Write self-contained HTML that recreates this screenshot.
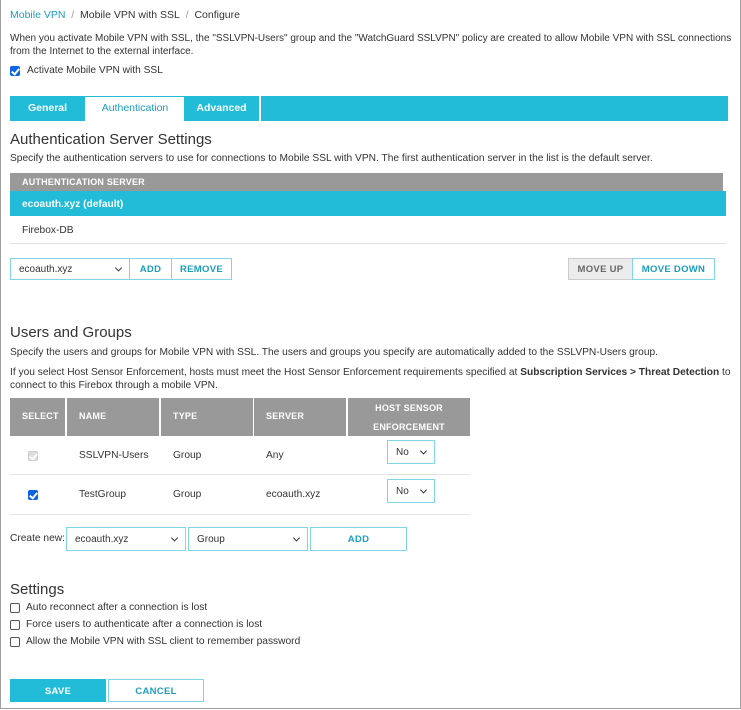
<!DOCTYPE html>
<html><head><meta charset="utf-8"><style>
*{box-sizing:border-box;margin:0;padding:0}
body{width:741px;height:710px;background:#fff;font-family:"Liberation Sans",sans-serif;font-size:10.2px;color:#333;position:relative;overflow:hidden}
.frame{position:absolute;left:0;top:0;width:741px;height:709px;border:1px solid #a0a0a0;border-top:none}
.a{position:absolute;white-space:nowrap}
h2{position:absolute;font-weight:normal;font-size:15px;color:#333;white-space:nowrap}
.teal{background:#22bcd8}
.cb{position:absolute;width:10px;height:10px;border:1px solid #555;border-radius:2px;background:#fff}
.cbon{background:#0a64e8;border-color:#0a64e8}
.cbon::after{content:"";position:absolute;left:2px;top:0px;width:3px;height:6px;border:solid #fff;border-width:0 2px 2px 0;transform:rotate(40deg)}
.cbdis{background:#ddd;border-color:#ccc}
.cbdis::after{content:"";position:absolute;left:2px;top:0px;width:3px;height:6px;border:solid #fff;border-width:0 2px 2px 0;transform:rotate(40deg)}
.btn{position:absolute;border:1px solid #7fd6e8;background:#fff;color:#1a9ec0;font-weight:bold;font-size:9.5px;text-align:center;letter-spacing:.3px}
.sel{position:absolute;border:1px solid #7fd6e8;background:#fff;font-size:10px;padding-left:8px;color:#333}
.sel::after{content:"";position:absolute;right:8px;top:50%;width:4px;height:4px;border:solid #333;border-width:0 1.3px 1.3px 0;transform:translateY(-70%) rotate(45deg)}
.th{position:absolute;background:#999;color:#fff;font-weight:bold;font-size:9px;letter-spacing:.2px}
.line{position:absolute;height:1px;background:#e2e2e2}
</style></head><body>
<div class="frame"></div>
<div class="a" style="left:10px;top:9px;font-size:10.5px"><span style="color:#1a9ec0">Mobile VPN</span><span style="color:#999">&nbsp;&nbsp;/&nbsp;&nbsp;</span>Mobile VPN with SSL<span style="color:#999">&nbsp;&nbsp;/&nbsp;&nbsp;</span>Configure</div>
<div class="a" style="left:10px;top:32px;line-height:13px;font-size:10px">When you activate Mobile VPN with SSL, the "SSLVPN-Users" group and the "WatchGuard SSLVPN" policy are created to allow Mobile VPN with SSL connections<br>from the Internet to the external interface.</div>
<div class="cb cbon" style="left:10px;top:66px"></div>
<div class="a" style="left:27px;top:65px">Activate Mobile VPN with SSL</div>

<div class="teal a" style="left:10px;top:96px;width:718px;height:25px"></div>
<div class="a" style="left:85px;top:96px;width:99px;height:25px;background:#fff;border-top:1px solid #22bcd8"></div>
<div class="a" style="left:259px;top:96px;width:2px;height:25px;background:#fff"></div>
<div class="a" style="left:10px;top:102px;width:75px;text-align:center;color:#fff;font-weight:bold;font-size:10.5px">General</div>
<div class="a" style="left:86px;top:102px;width:98px;text-align:center;color:#1a9ec0;font-size:10.5px">Authentication</div>
<div class="a" style="left:184px;top:102px;width:75px;text-align:center;color:#fff;font-weight:bold;font-size:10.5px">Advanced</div>

<h2 style="left:10px;top:131px">Authentication Server Settings</h2>
<div class="a" style="left:10px;top:153px">Specify the authentication servers to use for connections to Mobile SSL with VPN. The first authentication server in the list is the default server.</div>
<div class="th" style="left:10px;top:173px;width:713px;height:18px;padding:4px 0 0 12px">AUTHENTICATION SERVER</div>
<div class="teal a" style="left:10px;top:191px;width:716px;height:25px;color:#fff;font-weight:bold;padding:8px 0 0 12px">ecoauth.xyz (default)</div>
<div class="a" style="left:22px;top:225px">Firebox-DB</div>
<div class="line" style="left:10px;top:243px;width:716px"></div>

<div class="sel" style="left:10px;top:258px;width:120px;height:22px;padding-top:5px">ecoauth.xyz</div>
<div class="btn" style="left:129px;top:258px;width:43px;height:22px;padding-top:5px">ADD</div>
<div class="btn" style="left:171px;top:258px;width:61px;height:22px;padding-top:5px">REMOVE</div>
<div class="btn" style="left:568px;top:258px;width:65px;height:22px;padding-top:5px;background:#ececec;border-color:#ccc;color:#666">MOVE UP</div>
<div class="btn" style="left:632px;top:258px;width:83px;height:22px;padding-top:5px">MOVE DOWN</div>

<h2 style="left:10px;top:324px">Users and Groups</h2>
<div class="a" style="left:10px;top:347px">Specify the users and groups for Mobile VPN with SSL. The users and groups you specify are automatically added to the SSLVPN-Users group.</div>
<div class="a" style="left:10px;top:366px;line-height:13px">If you select Host Sensor Enforcement, hosts must meet the Host Sensor Enforcement requirements specified at <b>Subscription Services &gt; Threat Detection</b> to<br>connect to this Firebox through a mobile VPN.</div>

<div class="th" style="left:10px;top:398px;width:55px;height:38px;padding:13px 0 0 12px">SELECT</div>
<div class="th" style="left:67px;top:398px;width:92px;height:38px;padding:13px 0 0 12px">NAME</div>
<div class="th" style="left:161px;top:398px;width:92px;height:38px;padding:13px 0 0 12px">TYPE</div>
<div class="th" style="left:254px;top:398px;width:92px;height:38px;padding:13px 0 0 12px">SERVER</div>
<div class="th" style="left:348px;top:398px;width:122px;height:38px;padding:1px 0 0 0;text-align:center;line-height:19px">HOST SENSOR<br>ENFORCEMENT</div>

<div class="cb cbdis" style="left:28px;top:451px"></div>
<div class="a" style="left:79px;top:450px">SSLVPN-Users</div>
<div class="a" style="left:173px;top:450px">Group</div>
<div class="a" style="left:266px;top:450px">Any</div>
<div class="sel" style="left:387px;top:440px;width:48px;height:24px;padding-top:6px">No</div>
<div class="line" style="left:10px;top:474px;width:460px"></div>
<div class="cb cbon" style="left:28px;top:490px"></div>
<div class="a" style="left:79px;top:489px">TestGroup</div>
<div class="a" style="left:173px;top:489px">Group</div>
<div class="a" style="left:266px;top:489px">ecoauth.xyz</div>
<div class="sel" style="left:387px;top:479px;width:48px;height:24px;padding-top:6px">No</div>
<div class="line" style="left:10px;top:514px;width:460px"></div>

<div class="a" style="left:10px;top:533px">Create new:</div>
<div class="sel" style="left:66px;top:527px;width:120px;height:24px;padding-top:6px">ecoauth.xyz</div>
<div class="sel" style="left:188px;top:527px;width:120px;height:24px;padding-top:6px">Group</div>
<div class="btn" style="left:310px;top:527px;width:97px;height:24px;padding-top:6px">ADD</div>

<h2 style="left:10px;top:581px">Settings</h2>
<div class="cb" style="left:10px;top:603px"></div>
<div class="a" style="left:26px;top:602px">Auto reconnect after a connection is lost</div>
<div class="cb" style="left:10px;top:620px"></div>
<div class="a" style="left:26px;top:619px">Force users to authenticate after a connection is lost</div>
<div class="cb" style="left:10px;top:637px"></div>
<div class="a" style="left:26px;top:636px">Allow the Mobile VPN with SSL client to remember password</div>

<div class="btn" style="left:10px;top:679px;width:96px;height:23px;padding-top:6px;color:#fff;background:#22bcd8;border-color:#22bcd8">SAVE</div>
<div class="btn" style="left:108px;top:679px;width:96px;height:23px;padding-top:6px">CANCEL</div>
</body></html>
